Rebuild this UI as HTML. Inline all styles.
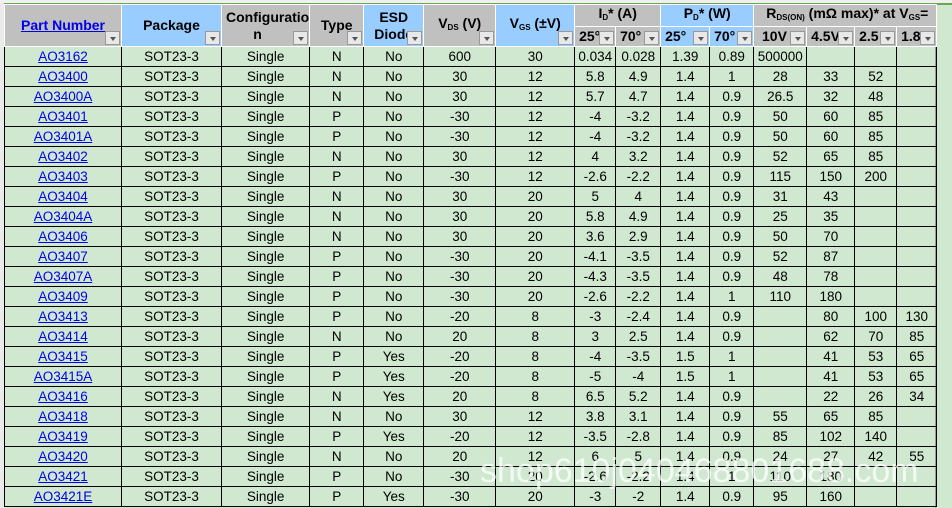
<!DOCTYPE html>
<html><head><meta charset="utf-8"><style>
html,body{margin:0;padding:0;width:952px;height:508px;overflow:hidden;background:#d0e8d0;font-family:"Liberation Sans",Arial,sans-serif;font-size:13.5px;position:relative}
.top{position:absolute;left:0;top:0;width:952px;height:3px;background:#f0f0f0;border-bottom:2px solid #6aa84f}
.lm{position:absolute;left:0;top:3px;width:4px;height:505px;background:#eaeaea}
table{position:absolute;left:4px;top:4px;border-collapse:collapse;table-layout:fixed}
td{border:1px solid #000;height:19px;padding:0;text-align:center;white-space:nowrap;overflow:hidden;line-height:19px}
th{background:#c0c0c0;border:1px solid #fff;font-weight:bold;padding:0;position:relative;font-size:14px;line-height:17px;overflow:hidden;white-space:nowrap}
th.b{background:#99ccff}
.dd{position:absolute;right:1px;bottom:1px;width:15px;height:14px;background:#e8e8e8;border:1px solid #999;box-sizing:border-box}
.dd:after{content:"";position:absolute;left:4px;top:5px;border-left:3px solid transparent;border-right:3px solid transparent;border-top:4px solid #555}
a{color:#0000ee;text-decoration:underline}
sub{font-size:8px;vertical-align:-2px}
.wm{position:absolute;left:480px;top:452px;font-size:34px;color:rgba(255,255,255,.75);white-space:nowrap}
.rl{position:absolute;left:935px;top:4px;width:1px;height:504px;background:#999}
</style></head><body>
<div class="top"></div><div class="lm"></div><div class="rl"></div>
<table>
<colgroup><col style="width:117px"><col style="width:100px"><col style="width:87px"><col style="width:54px"><col style="width:60px"><col style="width:72px"><col style="width:79px"><col style="width:41px"><col style="width:45px"><col style="width:49px"><col style="width:44px"><col style="width:53px"><col style="width:48px"><col style="width:42px"><col style="width:40px"></colgroup>
<tr style="height:20px">
<th rowspan="2" style="height:39px"><a style="color:#0000ee">Part Number</a><span class="dd"></span></th>
<th rowspan="2" class="b">Package<span class="dd"></span></th>
<th rowspan="2" style="white-space:normal;text-align:left;padding-left:4px">Configuratio<br>&nbsp;&nbsp;&nbsp;&nbsp;&nbsp;&nbsp;&nbsp;n<span class="dd"></span></th>
<th rowspan="2">Type<span class="dd"></span></th>
<th rowspan="2" class="b">ESD<br>Diode<span class="dd"></span></th>
<th rowspan="2">V<sub>DS</sub> (V)<span class="dd"></span></th>
<th rowspan="2" class="b">V<sub>GS</sub> (±V)<span class="dd"></span></th>
<th colspan="2">I<sub>D</sub>* (A)</th>
<th colspan="2" class="b">P<sub>D</sub>* (W)</th>
<th colspan="4" style="text-align:left;padding-left:12px">R<sub>DS(ON)</sub> (mΩ max)* at V<sub>GS</sub>=</th>
</tr>
<tr style="height:20px">
<th style="text-align:left">&nbsp;25°<span class="dd"></span></th><th style="text-align:left">&nbsp;70°<span class="dd"></span></th>
<th class="b" style="text-align:left">&nbsp;25°<span class="dd"></span></th><th class="b" style="text-align:left">&nbsp;70°<span class="dd"></span></th>
<th style="text-align:left">&nbsp;&nbsp;10V<span class="dd"></span></th><th style="text-align:left">&nbsp;4.5V<span class="dd"></span></th><th style="text-align:left">&nbsp;2.5<span class="dd"></span></th><th style="text-align:left">&nbsp;1.8<span class="dd"></span></th>
</tr>
<tr><td><a>AO3162</a></td><td>SOT23-3</td><td>Single</td><td>N</td><td>No</td><td>600</td><td>30</td><td>0.034</td><td>0.028</td><td>1.39</td><td>0.89</td><td>500000</td><td></td><td></td><td></td></tr>
<tr><td><a>AO3400</a></td><td>SOT23-3</td><td>Single</td><td>N</td><td>No</td><td>30</td><td>12</td><td>5.8</td><td>4.9</td><td>1.4</td><td>1</td><td>28</td><td>33</td><td>52</td><td></td></tr>
<tr><td><a>AO3400A</a></td><td>SOT23-3</td><td>Single</td><td>N</td><td>No</td><td>30</td><td>12</td><td>5.7</td><td>4.7</td><td>1.4</td><td>0.9</td><td>26.5</td><td>32</td><td>48</td><td></td></tr>
<tr><td><a>AO3401</a></td><td>SOT23-3</td><td>Single</td><td>P</td><td>No</td><td>-30</td><td>12</td><td>-4</td><td>-3.2</td><td>1.4</td><td>0.9</td><td>50</td><td>60</td><td>85</td><td></td></tr>
<tr><td><a>AO3401A</a></td><td>SOT23-3</td><td>Single</td><td>P</td><td>No</td><td>-30</td><td>12</td><td>-4</td><td>-3.2</td><td>1.4</td><td>0.9</td><td>50</td><td>60</td><td>85</td><td></td></tr>
<tr><td><a>AO3402</a></td><td>SOT23-3</td><td>Single</td><td>N</td><td>No</td><td>30</td><td>12</td><td>4</td><td>3.2</td><td>1.4</td><td>0.9</td><td>52</td><td>65</td><td>85</td><td></td></tr>
<tr><td><a>AO3403</a></td><td>SOT23-3</td><td>Single</td><td>P</td><td>No</td><td>-30</td><td>12</td><td>-2.6</td><td>-2.2</td><td>1.4</td><td>0.9</td><td>115</td><td>150</td><td>200</td><td></td></tr>
<tr><td><a>AO3404</a></td><td>SOT23-3</td><td>Single</td><td>N</td><td>No</td><td>30</td><td>20</td><td>5</td><td>4</td><td>1.4</td><td>0.9</td><td>31</td><td>43</td><td></td><td></td></tr>
<tr><td><a>AO3404A</a></td><td>SOT23-3</td><td>Single</td><td>N</td><td>No</td><td>30</td><td>20</td><td>5.8</td><td>4.9</td><td>1.4</td><td>0.9</td><td>25</td><td>35</td><td></td><td></td></tr>
<tr><td><a>AO3406</a></td><td>SOT23-3</td><td>Single</td><td>N</td><td>No</td><td>30</td><td>20</td><td>3.6</td><td>2.9</td><td>1.4</td><td>0.9</td><td>50</td><td>70</td><td></td><td></td></tr>
<tr><td><a>AO3407</a></td><td>SOT23-3</td><td>Single</td><td>P</td><td>No</td><td>-30</td><td>20</td><td>-4.1</td><td>-3.5</td><td>1.4</td><td>0.9</td><td>52</td><td>87</td><td></td><td></td></tr>
<tr><td><a>AO3407A</a></td><td>SOT23-3</td><td>Single</td><td>P</td><td>No</td><td>-30</td><td>20</td><td>-4.3</td><td>-3.5</td><td>1.4</td><td>0.9</td><td>48</td><td>78</td><td></td><td></td></tr>
<tr><td><a>AO3409</a></td><td>SOT23-3</td><td>Single</td><td>P</td><td>No</td><td>-30</td><td>20</td><td>-2.6</td><td>-2.2</td><td>1.4</td><td>1</td><td>110</td><td>180</td><td></td><td></td></tr>
<tr><td><a>AO3413</a></td><td>SOT23-3</td><td>Single</td><td>P</td><td>No</td><td>-20</td><td>8</td><td>-3</td><td>-2.4</td><td>1.4</td><td>0.9</td><td></td><td>80</td><td>100</td><td>130</td></tr>
<tr><td><a>AO3414</a></td><td>SOT23-3</td><td>Single</td><td>N</td><td>No</td><td>20</td><td>8</td><td>3</td><td>2.5</td><td>1.4</td><td>0.9</td><td></td><td>62</td><td>70</td><td>85</td></tr>
<tr><td><a>AO3415</a></td><td>SOT23-3</td><td>Single</td><td>P</td><td>Yes</td><td>-20</td><td>8</td><td>-4</td><td>-3.5</td><td>1.5</td><td>1</td><td></td><td>41</td><td>53</td><td>65</td></tr>
<tr><td><a>AO3415A</a></td><td>SOT23-3</td><td>Single</td><td>P</td><td>Yes</td><td>-20</td><td>8</td><td>-5</td><td>-4</td><td>1.5</td><td>1</td><td></td><td>41</td><td>53</td><td>65</td></tr>
<tr><td><a>AO3416</a></td><td>SOT23-3</td><td>Single</td><td>N</td><td>Yes</td><td>20</td><td>8</td><td>6.5</td><td>5.2</td><td>1.4</td><td>0.9</td><td></td><td>22</td><td>26</td><td>34</td></tr>
<tr><td><a>AO3418</a></td><td>SOT23-3</td><td>Single</td><td>N</td><td>No</td><td>30</td><td>12</td><td>3.8</td><td>3.1</td><td>1.4</td><td>0.9</td><td>55</td><td>65</td><td>85</td><td></td></tr>
<tr><td><a>AO3419</a></td><td>SOT23-3</td><td>Single</td><td>P</td><td>Yes</td><td>-20</td><td>12</td><td>-3.5</td><td>-2.8</td><td>1.4</td><td>0.9</td><td>85</td><td>102</td><td>140</td><td></td></tr>
<tr><td><a>AO3420</a></td><td>SOT23-3</td><td>Single</td><td>N</td><td>No</td><td>20</td><td>12</td><td>6</td><td>5</td><td>1.4</td><td>0.9</td><td>24</td><td>27</td><td>42</td><td>55</td></tr>
<tr><td><a>AO3421</a></td><td>SOT23-3</td><td>Single</td><td>P</td><td>No</td><td>-30</td><td>20</td><td>-2.6</td><td>-2.2</td><td>1.4</td><td>1</td><td>110</td><td>180</td><td></td><td></td></tr>
<tr><td><a>AO3421E</a></td><td>SOT23-3</td><td>Single</td><td>P</td><td>Yes</td><td>-30</td><td>20</td><td>-3</td><td>-2</td><td>1.4</td><td>0.9</td><td>95</td><td>160</td><td></td><td></td></tr>
</table>
<div class="wm">shop610j040468801688.com</div>
</body></html>
